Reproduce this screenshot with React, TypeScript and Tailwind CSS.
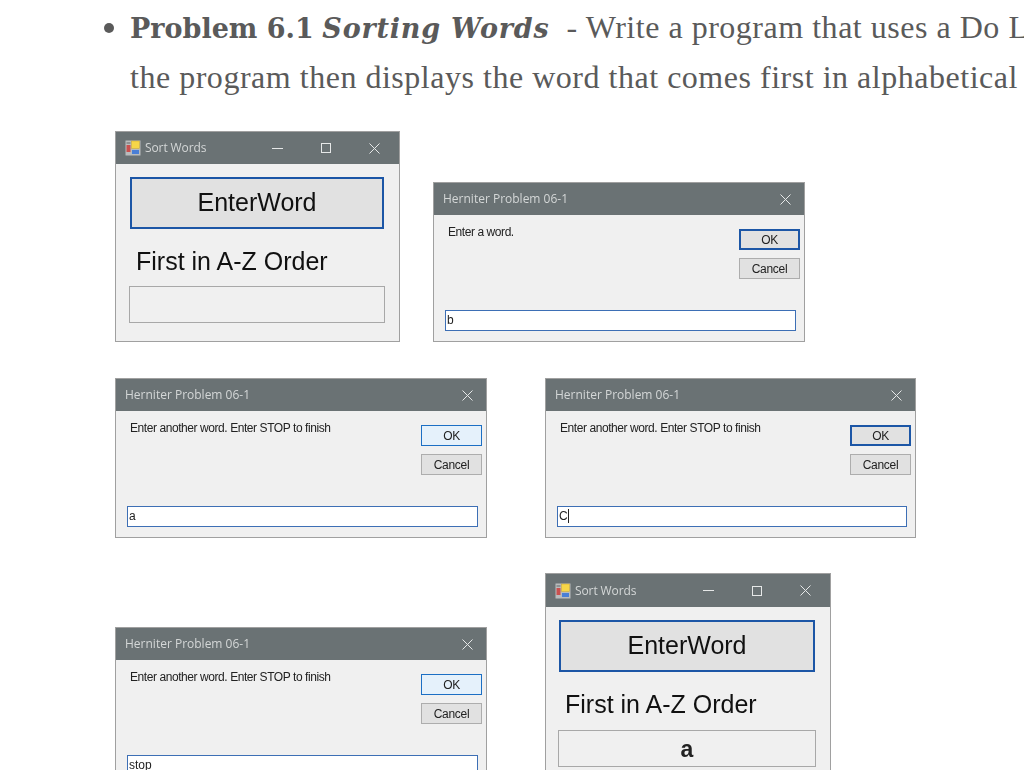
const TITLE_FONT = "font-['Open_Sans',sans-serif]";
const WIN_FONT = "font-['Liberation_Sans',Arial,sans-serif]";

function AppIcon() {
  return (
    <svg width="16" height="16" viewBox="0 0 16 16" className="shrink-0">
      <rect x="0.5" y="0.5" width="15" height="15" fill="#b9bcbd" />
      <rect x="6.5" y="1" width="8" height="7.5" fill="#f7d648" stroke="#c9a52c" strokeWidth="0.5" />
      <rect x="1.5" y="5" width="4" height="7" fill="#c9504f" />
      <rect x="7" y="10" width="7" height="4" fill="#4a7fd6" />
      <rect x="1.5" y="2" width="4" height="2" fill="#8d9192" />
    </svg>
  );
}

function CloseGlyph() {
  return (
    <svg width="11" height="11" viewBox="0 0 11 11" fill="none" stroke="#e6e8e8" strokeWidth="1">
      <path d="M0.5 0.5L10.5 10.5M10.5 0.5L0.5 10.5" />
    </svg>
  );
}

function SortWindow({
  box,
  titleH,
  inner,
  resultGap,
  value,
}: {
  box: string;
  titleH: string;
  inner: string;
  resultGap: string;
  value?: string;
}) {
  return (
    <div className={`absolute ${box} flex flex-col border border-[#a0a0a0] bg-[#f0f0f0] blur-[0.35px] ${WIN_FONT}`}>
      <div className={`${titleH} shrink-0 flex items-center bg-[#6a7274] pl-[9px] text-[#d4d7d7]`}>
        <AppIcon />
        <span className={`ml-[4px] text-[12px] tracking-[-0.1px] ${TITLE_FONT}`}>Sort Words</span>
        <div className="ml-auto flex items-center pr-[19px]">
          <div className="w-[11px] h-px bg-[#e6e8e8]" />
          <div className="w-[10px] h-[10px] border border-[#e6e8e8] ml-[38px]" />
          <div className="ml-[38px] flex">
            <CloseGlyph />
          </div>
        </div>
      </div>
      <div className={`flex-1 flex flex-col ${inner} pt-[13px]`}>
        <div className="mx-px h-[52px] flex items-center justify-center border-2 border-[#1c56a6] bg-[#e1e1e1] text-[25px] text-[#111]">
          EnterWord
        </div>
        <div className="mt-[19px] ml-[7px] h-[26px] leading-[26px] text-[25px] text-[#111]">First in A-Z Order</div>
        <div
          className={`${resultGap} h-[37px] pt-[2px] flex items-center justify-center border border-[#a8a8a8] text-[23px] font-bold leading-none text-[#222]`}
        >
          {value}
        </div>
      </div>
    </div>
  );
}

function InputDialog({
  box,
  message,
  value,
  okStyle,
  caret,
}: {
  box: string;
  message: string;
  value: string;
  okStyle: string;
  caret?: boolean;
}) {
  return (
    <div className={`absolute ${box} h-[160px] flex flex-col border border-[#a0a0a0] bg-[#f0f0f0] blur-[0.35px] ${WIN_FONT}`}>
      <div className="h-[32px] shrink-0 flex items-center justify-between bg-[#6a7274] pl-[9px] pr-[13px] text-[#d4d7d7]">
        <span className={`text-[12px] ${TITLE_FONT}`}>Herniter Problem 06-1</span>
        <CloseGlyph />
      </div>
      <div className="flex-1 flex flex-col pl-[11px] pr-[4px]">
        <div className="flex justify-between pt-[14px]">
          <div className="pl-[3px] -mt-[4px] text-[12px] leading-[14px] tracking-[-0.43px] text-[#222]">{message}</div>
          <div className="flex flex-col gap-[8px] text-[12px] tracking-[-0.3px] text-[#222]">
            <div className={`w-[61px] h-[21px] flex items-center justify-center ${okStyle}`}>OK</div>
            <div className="w-[61px] h-[21px] flex items-center justify-center border border-[#adadad] bg-[#e1e1e1]">
              Cancel
            </div>
          </div>
        </div>
        <div className="mt-[31px] mr-[4px] flex items-center h-[21px] pb-[2px] border border-[#3d6fb5] bg-white pl-px text-[12px] text-[#222]">
          {value}
          {caret && <span className="w-px h-[14px] bg-[#222]" />}
        </div>
      </div>
    </div>
  );
}

const OK_FOCUS = "border-2 border-[#1c56a6] bg-[#e1e1e1]";
const OK_HOVER = "border border-[#1c6fc4] bg-[#e5f1fb]";
const BOLD_HEAD = "font-['DejaVu_Serif',Georgia,serif] font-bold text-[27px]";

export default function App() {
  return (
    <div className="relative w-[1024px] h-[770px] overflow-hidden bg-white">
      <ul className="pl-[130px] pt-[2px] text-[32px] leading-[50px] tracking-[0.52px] text-[#5a5a5a] font-['Liberation_Serif',Georgia,serif] whitespace-nowrap">
        <li className="relative h-[50px]">
          <span className="absolute left-[-26px] top-[21px] w-[10px] h-[10px] rounded-full bg-[#5a5a5a]" />
          <b className={`tracking-normal ${BOLD_HEAD}`}>Problem 6.1</b>{" "}
          <b className={`italic tracking-[0.8px] ${BOLD_HEAD}`}>Sorting Words</b>&nbsp; - Write a program that uses a Do L
        </li>
        <li className="h-[50px]">the program then displays the word that comes first in alphabetical</li>
      </ul>

      <SortWindow
        box="left-[115px] top-[131px] w-[285px] h-[211px]"
        titleH="h-[32px]"
        inner="pl-[13px] pr-[14px]"
        resultGap="mt-[12px]"
      />
      <InputDialog box="left-[433px] top-[182px] w-[372px]" message="Enter a word." value="b" okStyle={OK_FOCUS} />
      <InputDialog
        box="left-[115px] top-[378px] w-[372px]"
        message="Enter another word. Enter STOP to finish"
        value="a"
        okStyle={OK_HOVER}
      />
      <InputDialog
        box="left-[545px] top-[378px] w-[371px]"
        message="Enter another word. Enter STOP to finish"
        value="C"
        okStyle={OK_FOCUS}
        caret
      />
      <InputDialog
        box="left-[115px] top-[627px] w-[372px]"
        message="Enter another word. Enter STOP to finish"
        value="stop"
        okStyle={OK_HOVER}
      />
      <SortWindow
        box="left-[545px] top-[573px] w-[286px] h-[212px]"
        titleH="h-[33px]"
        inner="pl-[12px] pr-[14px]"
        resultGap="mt-[13px]"
        value="a"
      />
    </div>
  );
}
